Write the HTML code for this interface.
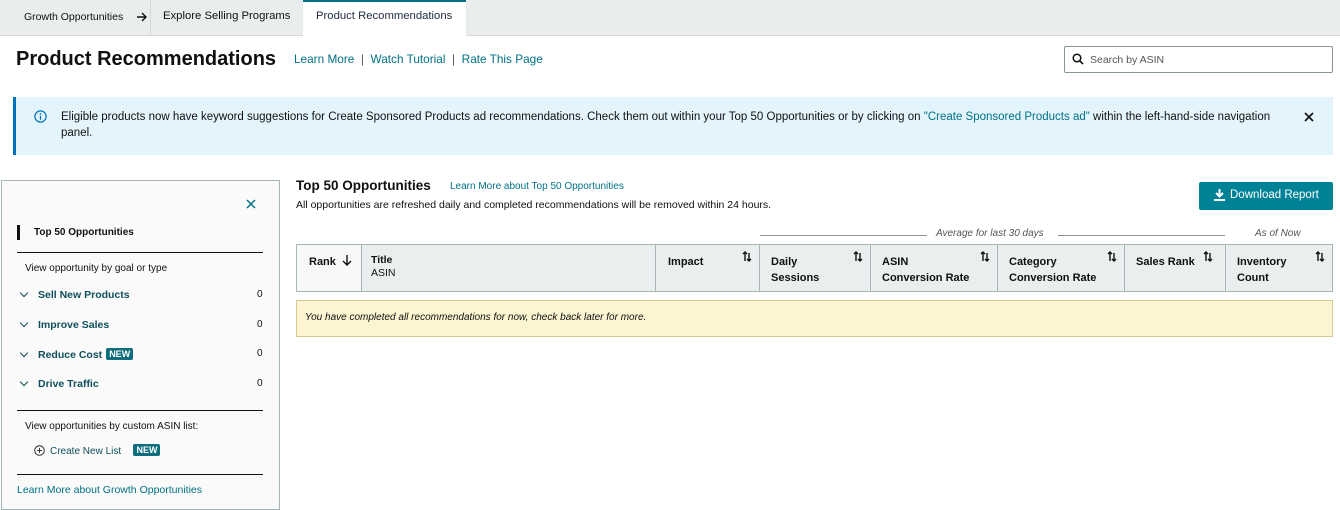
<!DOCTYPE html>
<html><head><style>
*{box-sizing:border-box;margin:0;padding:0}
body{width:1340px;height:497px;overflow:hidden;background:#fff;font-family:"Liberation Sans",sans-serif;color:#0f1111;position:relative;font-size:11px}
.a{position:absolute;white-space:nowrap}
.link{color:#007185}
.tabbar{position:absolute;left:0;top:0;width:1340px;height:36px;background:#eaeded;border-bottom:1px solid #d5d9d9}
.col{position:absolute;top:244px;height:48px;border:1px solid #a6b5b5;border-left:none;background:#ebeeee;font-weight:bold;font-size:11px;padding:9px 0 0 11px;line-height:16px}
.sort{position:absolute;right:7px;top:6px}
.nav{position:absolute;left:20px;font-size:10.5px;color:#0f4f5c;font-weight:bold}
.new{display:inline-block;background:#0e6e7c;color:#fff;font-size:9px;font-weight:bold;padding:1px 3px;border-radius:2px;margin-left:4px;vertical-align:1px}
.hr{position:absolute;left:17px;width:246px;height:1px;background:#111}
.chev{display:inline-block;width:6px;height:6px;border-right:1.5px solid #0f4f5c;border-bottom:1.5px solid #0f4f5c;transform:rotate(45deg);margin:0 11px 2px 1px}
</style></head><body>
<div class="tabbar"></div>
<div class="a" style="left:24px;top:11px;font-size:10.5px">Growth Opportunities</div>
<svg class="a" style="left:136px;top:11px" width="12" height="12" viewBox="0 0 12 12"><path d="M1 6h9M6 2l4 4-4 4" fill="none" stroke="#111" stroke-width="1.4"/></svg>
<div style="position:absolute;left:150px;top:0;width:1px;height:36px;background:#d5d9d9"></div>
<div class="a" style="left:163px;top:10px;font-size:11.3px">Explore Selling Programs</div>
<div style="position:absolute;left:303px;top:0;width:163px;height:37px;background:#fff;border-top:2px solid #007185"></div>
<div class="a" style="left:316px;top:10px;font-size:11.3px;color:#232f3e">Product Recommendations</div>

<div class="a" style="left:16px;top:48px;font-size:20px;font-weight:bold">Product Recommendations</div>
<div class="a" style="left:294px;top:52px;font-size:11.8px;color:#555"><span class="link">Learn More</span> &nbsp;| &nbsp;<span class="link">Watch Tutorial</span> &nbsp;| &nbsp;<span class="link">Rate This Page</span></div>
<div style="position:absolute;left:1064px;top:46px;width:269px;height:27px;border:1px solid #879596;border-radius:2px"></div>
<svg class="a" style="left:1072px;top:53px" width="12" height="12" viewBox="0 0 12 12"><circle cx="5" cy="5" r="3.8" fill="none" stroke="#111" stroke-width="1.5"/><path d="M7.8 7.8L11 11" stroke="#111" stroke-width="1.6"/></svg>
<div class="a" style="left:1090px;top:54px;font-size:10.5px;color:#555">Search by ASIN</div>

<div style="position:absolute;left:13px;top:97px;width:1320px;height:58px;background:#e3f4fd;border-left:3px solid #0073bb"></div>
<svg class="a" style="left:34px;top:110px" width="13" height="13" viewBox="0 0 13 13"><circle cx="6.5" cy="6.5" r="5.6" fill="none" stroke="#0073bb" stroke-width="1.2"/><circle cx="6.5" cy="4" r=".9" fill="#0073bb"/><path d="M6.5 5.8v4" stroke="#0073bb" stroke-width="1.3"/></svg>
<div class="a" style="left:61px;top:109px;font-size:11.5px;line-height:16px;white-space:normal;width:1215px">Eligible products now have keyword suggestions for Create Sponsored Products ad recommendations. Check them out within your Top 50 Opportunities or by clicking on <span class="link">"Create Sponsored Products ad"</span> within the left-hand-side navigation panel.</div>
<svg class="a" style="left:1304px;top:112px" width="10" height="10" viewBox="0 0 10 10"><path d="M1 1l8 8M9 1l-8 8" stroke="#111" stroke-width="1.6"/></svg>

<div style="position:absolute;left:1px;top:180px;width:279px;height:330px;border:1px solid #a6b5b5;background:#fafafa"></div>
<svg class="a" style="left:246px;top:199px" width="10" height="10" viewBox="0 0 10 10"><path d="M1 1l8 8M9 1l-8 8" stroke="#007185" stroke-width="1.5"/></svg>
<div style="position:absolute;left:17px;top:225px;width:3px;height:15px;background:#111"></div>
<div class="a" style="left:34px;top:227px;font-size:10px;font-weight:bold">Top 50 Opportunities</div>
<div class="hr" style="top:252px"></div>
<div class="a" style="left:25px;top:263px;font-size:10px">View opportunity by goal or type</div>
<div class="nav" style="top:289px"><span class="chev"></span>Sell New Products</div>
<div class="nav" style="top:319px"><span class="chev"></span>Improve Sales</div>
<div class="nav" style="top:348px"><span class="chev"></span>Reduce Cost<span class="new">NEW</span></div>
<div class="nav" style="top:378px"><span class="chev"></span>Drive Traffic</div>
<div class="a" style="left:257px;top:289px;font-size:10px">0</div>
<div class="a" style="left:257px;top:319px;font-size:10px">0</div>
<div class="a" style="left:257px;top:348px;font-size:10px">0</div>
<div class="a" style="left:257px;top:378px;font-size:10px">0</div>
<div class="hr" style="top:410px"></div>
<div class="a" style="left:25px;top:421px;font-size:10px">View opportunities by custom ASIN list:</div>
<svg class="a" style="left:34px;top:445px" width="11" height="11" viewBox="0 0 11 11"><circle cx="5.5" cy="5.5" r="4.8" fill="none" stroke="#333"/><path d="M5.5 3v5M3 5.5h5" stroke="#333"/></svg>
<div class="a" style="left:50px;top:444px;font-size:10px;color:#0f4f5c">Create New List &nbsp;&nbsp;<span class="new">NEW</span></div>
<div class="hr" style="top:474px"></div>
<div class="a link" style="left:17px;top:484px;font-size:10.5px">Learn More about Growth Opportunities</div>

<div class="a" style="left:296px;top:178px;font-size:13.5px;font-weight:bold">Top 50 Opportunities</div>
<div class="a link" style="left:450px;top:181px;font-size:10px">Learn More about Top 50 Opportunities</div>
<div class="a" style="left:296px;top:199px;font-size:10.5px">All opportunities are refreshed daily and completed recommendations will be removed within 24 hours.</div>
<div style="position:absolute;left:1199px;top:182px;width:134px;height:28px;background:#008296;border-radius:2px"></div>
<svg class="a" style="left:1214px;top:189px" width="11" height="12" viewBox="0 0 11 12"><path d="M5.5 0v7M2 4l3.5 3.5L9 4" fill="none" stroke="#fff" stroke-width="2"/><path d="M0 11h11" stroke="#fff" stroke-width="2"/></svg>
<div class="a" style="left:1230px;top:189px;font-size:11.5px;color:#fff">Download Report</div>

<div style="position:absolute;left:760px;top:235px;width:167px;height:1px;background:#879596"></div>
<div class="a" style="left:936px;top:228px;font-size:10px;font-style:italic;color:#555">Average for last 30 days</div>
<div style="position:absolute;left:1058px;top:235px;width:167px;height:1px;background:#879596"></div>
<div class="a" style="left:1255px;top:228px;font-size:10px;font-style:italic;color:#555">As of Now</div>

<div class="col" style="left:296px;width:66px;background:#f7f8f8;border-left:1px solid #a6b5b5;padding-left:12px">Rank <svg style="vertical-align:-1px;margin-left:3px" width="10" height="11" viewBox="0 0 10 11"><path d="M5 0v10M1 6l4 4 4-4" fill="none" stroke="#111" stroke-width="1.4"/></svg></div>
<div class="col" style="left:362px;width:294px;padding-left:9px;font-size:10.5px;line-height:13px;padding-top:9px">Title<br><span style="font-weight:normal">ASIN</span></div>
<div class="col" style="left:656px;width:104px;padding-left:12px">Impact<svg class="sort" width="10" height="11"><path d="M3 10V1M1 3l2-2 2 2" fill="none" stroke="#111" stroke-width="1.4"/><path d="M7 2v8M5 8l2 2 2-2" fill="none" stroke="#111" stroke-width="1.4"/></svg></div>
<div class="col" style="left:760px;width:111px">Daily<br>Sessions<svg class="sort" width="10" height="11"><path d="M3 10V1M1 3l2-2 2 2" fill="none" stroke="#111" stroke-width="1.4"/><path d="M7 2v8M5 8l2 2 2-2" fill="none" stroke="#111" stroke-width="1.4"/></svg></div>
<div class="col" style="left:871px;width:127px">ASIN<br>Conversion Rate<svg class="sort" width="10" height="11"><path d="M3 10V1M1 3l2-2 2 2" fill="none" stroke="#111" stroke-width="1.4"/><path d="M7 2v8M5 8l2 2 2-2" fill="none" stroke="#111" stroke-width="1.4"/></svg></div>
<div class="col" style="left:998px;width:127px">Category<br>Conversion Rate<svg class="sort" width="10" height="11"><path d="M3 10V1M1 3l2-2 2 2" fill="none" stroke="#111" stroke-width="1.4"/><path d="M7 2v8M5 8l2 2 2-2" fill="none" stroke="#111" stroke-width="1.4"/></svg></div>
<div class="col" style="left:1125px;width:101px">Sales Rank<svg class="sort" style="right:12px" width="10" height="11"><path d="M3 10V1M1 3l2-2 2 2" fill="none" stroke="#111" stroke-width="1.4"/><path d="M7 2v8M5 8l2 2 2-2" fill="none" stroke="#111" stroke-width="1.4"/></svg></div>
<div class="col" style="left:1226px;width:107px">Inventory<br>Count<svg class="sort" width="10" height="11"><path d="M3 10V1M1 3l2-2 2 2" fill="none" stroke="#111" stroke-width="1.4"/><path d="M7 2v8M5 8l2 2 2-2" fill="none" stroke="#111" stroke-width="1.4"/></svg></div>

<div style="position:absolute;left:296px;top:300px;width:1037px;height:37px;background:#fdf4d1;border:1px solid #d5c98f"></div>
<div class="a" style="left:305px;top:312px;font-size:10px;font-style:italic">You have completed all recommendations for now, check back later for more.</div>
</body></html>
